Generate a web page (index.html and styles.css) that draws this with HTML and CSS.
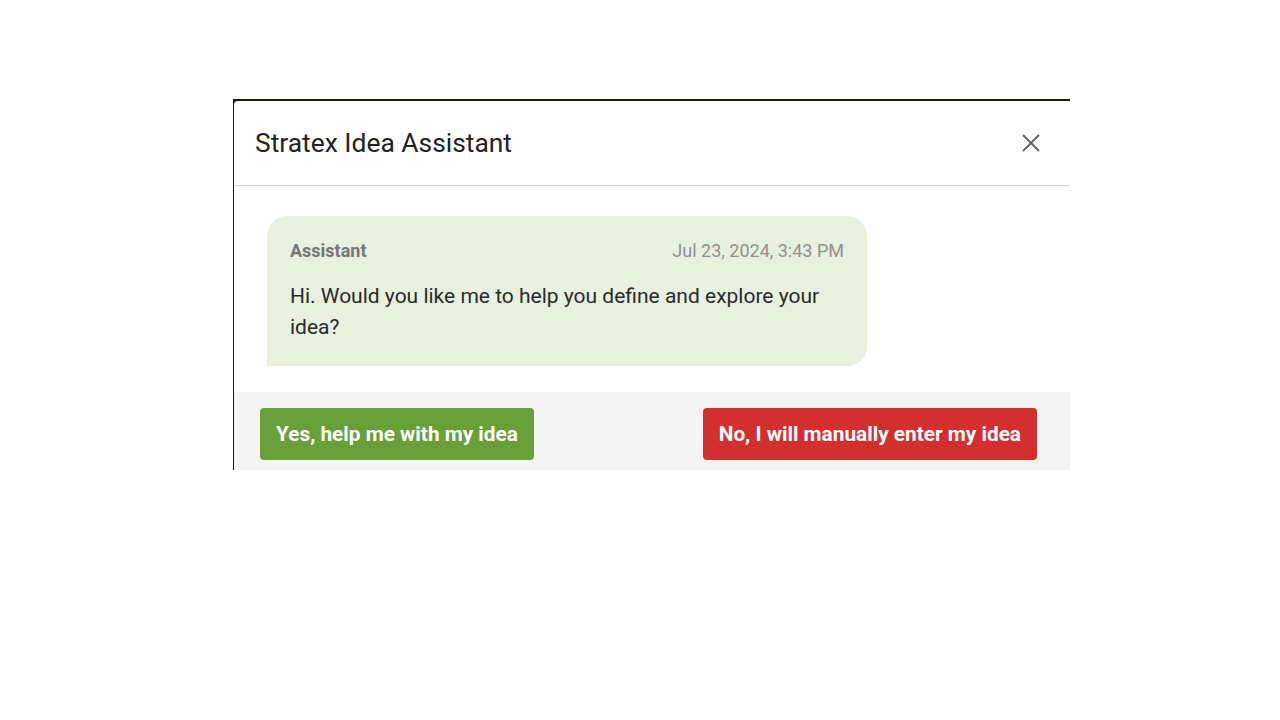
FILE: index.html
```html
<!DOCTYPE html>
<html lang="en">
<head>
  <meta charset="UTF-8">
  <meta name="viewport" content="width=device-width, initial-scale=1.0">
  <title>Stratex Idea Assistant</title>
  <link rel="stylesheet" href="styles.css">
</head>
<body>
  <div class="frame">
    <div class="dialog">
      <div class="dialog-header">
        <h2>Stratex Idea Assistant</h2>
        <button class="close-btn" aria-label="Close">
          <svg width="18" height="18" viewBox="0 0 18 18">
            <line x1="1" y1="1" x2="17" y2="17" />
            <line x1="17" y1="1" x2="1" y2="17" />
          </svg>
        </button>
      </div>
      <div class="dialog-body">
        <div class="bubble">
          <div class="bubble-meta">
            <span class="sender">Assistant</span>
            <span class="time">Jul 23, 2024, 3:43 PM</span>
          </div>
          <p class="bubble-text">Hi. Would you like me to help you define and explore your idea?</p>
        </div>
      </div>
      <div class="dialog-actions">
        <button class="btn btn-yes">Yes, help me with my idea</button>
        <button class="btn btn-no">No, I will manually enter my idea</button>
      </div>
    </div>
  </div>
</body>
</html>
```

FILE: styles.css
```css
body, html {
  margin: 0;
  padding: 0;
  background: #ffffff;
  font-family: Roboto, "Liberation Sans", sans-serif;
}

.frame {
  width: 837px;
  height: 371px;
  margin: 99px 0 0 233px;
  padding: 2px 0 0 1px;
  box-sizing: border-box;
  background: #151c0e;
  overflow: hidden;
}

.dialog {
  background: #ffffff;
  border-top-left-radius: 4px;
  height: 100%;
}

.dialog-header {
  display: flex;
  align-items: center;
  justify-content: space-between;
  height: 84px;
  padding: 0 30px 0 21px;
  border-bottom: 1px solid #d4d4d4;
}

.dialog-header h2 {
  margin: 0;
  font-size: 26.4px;
  font-weight: 400;
  color: #222222;
}

.close-btn {
  background: none;
  border: none;
  padding: 0;
  width: 18px;
  height: 18px;
  cursor: pointer;
}

.close-btn svg {
  display: block;
}

.close-btn line {
  stroke: #646464;
  stroke-width: 2;
}

.dialog-body {
  padding: 30px 0 26px 33px;
}

.bubble {
  width: 600px;
  box-sizing: border-box;
  padding: 25px 23px 23px;
  background: #e8f1df;
  border-radius: 20px 20px 20px 0;
}

.bubble-meta {
  display: flex;
  justify-content: space-between;
  font-size: 18px;
  line-height: 20px;
}

.sender {
  font-weight: 700;
  color: #767676;
}

.time {
  color: #909090;
}

.bubble-text {
  margin: 20px 0 0;
  font-size: 21px;
  line-height: 31px;
  color: #2a2a2a;
}

.dialog-actions {
  display: flex;
  justify-content: space-between;
  padding: 16px 33px 16px 26px;
  background: #f4f4f4;
}

.btn {
  height: 52px;
  padding: 0 16px;
  border: none;
  border-radius: 4px;
  font-family: Roboto, "Liberation Sans", sans-serif;
  font-size: 20.8px;
  font-weight: 700;
  color: #ffffff;
  cursor: pointer;
}

.btn-yes {
  background: #689f38;
}

.btn-no {
  background: #d32f2f;
}
```
